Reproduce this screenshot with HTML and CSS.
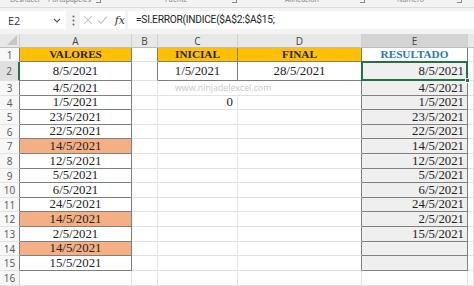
FILE: index.html
```html
<!DOCTYPE html>
<html lang="es">
<head>
<meta charset="utf-8">
<link rel="stylesheet" href="styles.css">
</head>
<body>
<div class="ribbon">
  <span class="grp g1">Deshacer</span>
  <span class="grp g2">Portapapeles</span>
  <span class="launch l1"></span>
  <span class="grp g3">Fuente</span>
  <span class="launch l2"></span>
  <span class="grp g4">Alineación</span>
  <span class="launch l3"></span>
  <span class="grp g5">Número</span>
  <span class="launch l4"></span>
</div>
<div class="fbar">
  <div class="namebox">
    <span class="ref">E2</span>
    <svg class="chev" width="8" height="5" viewBox="0 0 8 5"><path d="M1 1 L4 4 L7 1" fill="none" stroke="#555" stroke-width="1.1"/></svg>
  </div>
  <div class="dots">
    <svg width="3" height="11" viewBox="0 0 3 11"><circle cx="1.5" cy="1.5" r="1" fill="#666"/><circle cx="1.5" cy="5.5" r="1" fill="#666"/><circle cx="1.5" cy="9.5" r="1" fill="#666"/></svg>
  </div>
  <div class="fxbox">
    <svg class="ic" width="10" height="10" viewBox="0 0 10 10"><path d="M1 1 L9 9 M9 1 L1 9" stroke="#c4c4c4" stroke-width="1.1"/></svg>
    <svg class="ic" width="11" height="10" viewBox="0 0 11 10"><path d="M1 5.5 L4 8.5 L10 1.5" fill="none" stroke="#c4c4c4" stroke-width="1.1"/></svg>
    <span class="fx">fx</span>
  </div>
  <div class="formula">=SI.ERROR(INDICE($A$2:$A$15;</div>
</div>
<div class="sheet">
  <div class="ch corner"><svg width="10" height="10" viewBox="0 0 10 10"><path d="M10 0 L10 10 L0 10 Z" fill="#c6c6c6"/></svg></div>
  <div class="ch">A</div><div class="ch">B</div><div class="ch">C</div><div class="ch">D</div><div class="ch chsel">E</div><div class="ch rest"></div>

  <div class="rh br">1</div>
  <div class="c br bb yel hd">VALORES</div>
  <div class="c br"></div>
  <div class="c br bb yel hd">INICIAL</div>
  <div class="c br bb yel hd">FINAL</div>
  <div class="c br bb hd blue">RESULTADO</div>
  <div class="c"></div>

  <div class="rh br rhsel">2</div>
  <div class="c br bb">8/5/2021</div>
  <div class="c br"></div>
  <div class="c br bb">1/5/2021</div>
  <div class="c br bb">28/5/2021</div>
  <div class="c br bb res sel">8/5/2021<span class="handle"></span></div>
  <div class="c"></div>

  <div class="rh br">3</div>
  <div class="c br bb">4/5/2021</div>
  <div class="c"></div>
  <div class="c wm">www.ninjadelexcel.com</div>
  <div class="c br bb res">4/5/2021</div>
  <div class="c"></div>

  <div class="rh br">4</div>
  <div class="c br bb">1/5/2021</div>
  <div class="c"></div>
  <div class="c right">0</div>
  <div class="c br"></div>
  <div class="c br bb res">1/5/2021</div>
  <div class="c"></div>

  <div class="rh br">5</div>
  <div class="c br bb">23/5/2021</div>
  <div class="c"></div><div class="c"></div><div class="c br"></div>
  <div class="c br bb res">23/5/2021</div>
  <div class="c"></div>

  <div class="rh br">6</div>
  <div class="c br bb">22/5/2021</div>
  <div class="c"></div><div class="c"></div><div class="c br"></div>
  <div class="c br bb res">22/5/2021</div>
  <div class="c"></div>

  <div class="rh br">7</div>
  <div class="c br bb org">14/5/2021</div>
  <div class="c"></div><div class="c"></div><div class="c br"></div>
  <div class="c br bb res">14/5/2021</div>
  <div class="c"></div>

  <div class="rh br">8</div>
  <div class="c br bb">12/5/2021</div>
  <div class="c"></div><div class="c"></div><div class="c br"></div>
  <div class="c br bb res">12/5/2021</div>
  <div class="c"></div>

  <div class="rh br">9</div>
  <div class="c br bb">5/5/2021</div>
  <div class="c"></div><div class="c"></div><div class="c br"></div>
  <div class="c br bb res">5/5/2021</div>
  <div class="c"></div>

  <div class="rh br">10</div>
  <div class="c br bb">6/5/2021</div>
  <div class="c"></div><div class="c"></div><div class="c br"></div>
  <div class="c br bb res">6/5/2021</div>
  <div class="c"></div>

  <div class="rh br">11</div>
  <div class="c br bb">24/5/2021</div>
  <div class="c"></div><div class="c"></div><div class="c br"></div>
  <div class="c br bb res">24/5/2021</div>
  <div class="c"></div>

  <div class="rh br">12</div>
  <div class="c br bb org">14/5/2021</div>
  <div class="c"></div><div class="c"></div><div class="c br"></div>
  <div class="c br bb res">2/5/2021</div>
  <div class="c"></div>

  <div class="rh br">13</div>
  <div class="c br bb">2/5/2021</div>
  <div class="c"></div><div class="c"></div><div class="c br"></div>
  <div class="c br bb res">15/5/2021</div>
  <div class="c"></div>

  <div class="rh br">14</div>
  <div class="c br bb org">14/5/2021</div>
  <div class="c"></div><div class="c"></div><div class="c br"></div>
  <div class="c br bb res"></div>
  <div class="c"></div>

  <div class="rh br">15</div>
  <div class="c br bb">15/5/2021</div>
  <div class="c"></div><div class="c"></div><div class="c br"></div>
  <div class="c br bb res"></div>
  <div class="c"></div>

  <div class="rh">16</div>
  <div class="c"></div><div class="c"></div><div class="c"></div><div class="c"></div><div class="c"></div><div class="c"></div>
</div>
</body>
</html>
```
FILE: styles.css
```css
* { box-sizing: border-box; }
html, body {
  margin: 0;
  padding: 0;
  width: 474px;
  height: 286px;
  overflow: hidden;
  background: #ffffff;
}
.ribbon {
  position: relative;
  height: 8px;
  background: #f3f3f3;
  border-bottom: 1px solid #dcdcdc;
  overflow: hidden;
  font-family: "Open Sans", sans-serif;
  font-size: 7px;
  color: #7a7a7a;
}
.grp {
  position: absolute;
  top: -4px;
  line-height: 8px;
}
.g1 { left: 10px; }
.g2 { left: 48px; }
.g3 { left: 165px; }
.g4 { left: 285px; }
.g5 { left: 397px; }
.launch {
  position: absolute;
  top: -2px;
  width: 5px;
  height: 5px;
  border-right: 1px solid #888;
  border-bottom: 1px solid #888;
}
.l1 { left: 96px; }
.l2 { left: 232px; }
.l3 { left: 360px; }
.l4 { left: 457px; }

.fbar {
  height: 26px;
  background: #f3f3f3;
  display: flex;
  align-items: flex-start;
  padding-top: 3px;
  font-family: "Open Sans", sans-serif;
}
.namebox {
  width: 66px;
  height: 18px;
  background: #ffffff;
  display: flex;
  align-items: center;
  justify-content: space-between;
  padding: 0 5px 0 8px;
  font-size: 11px;
  color: #333;
}
.dots {
  width: 14px;
  height: 18px;
  display: flex;
  align-items: center;
  justify-content: center;
}
.fxbox {
  width: 45px;
  height: 18px;
  background: #ffffff;
  display: flex;
  align-items: center;
  gap: 4px;
  padding-left: 3px;
}
.fx {
  font-family: "DejaVu Serif", serif;
  font-style: italic;
  font-size: 11px;
  color: #333;
  margin-left: 3px;
}
.formula {
  flex: 1;
  height: 18px;
  margin-left: 3px;
  background: #ffffff;
  padding-left: 8px;
  font-family: Roboto, "Open Sans", sans-serif;
  font-size: 10.2px;
  letter-spacing: -0.25px;
  line-height: 18px;
  color: #222;
  white-space: nowrap;
}

.sheet {
  display: grid;
  grid-template-columns: 20px 112px 26px 80px 124px 106px 1fr;
  grid-template-rows: 14px 14px 19px 15px 14px 15px 14px 15px 15px 14px 15px 14px 15px 15px 14px 15px 15px;
  font-family: "Liberation Serif", serif;
  font-size: 12.8px;
  color: #222;
}
.ch {
  background: #e8e8e8;
  border-right: 1px solid #d0d0d0;
  border-bottom: 1px solid #bdbdbd;
  font-family: "Open Sans", sans-serif;
  font-size: 10px;
  color: #444;
  display: flex;
  align-items: center;
  justify-content: center;
}
.corner {
  justify-content: flex-end;
  align-items: flex-end;
  padding: 0 2px 2px 0;
}
.chsel { background: #d4d4d4; }
.rest { border-right: none; }
.rh {
  background: #f7f7f7;
  border-right: 1px solid #d0d0d0;
  border-bottom: 1px solid #e2e2e2;
  font-family: "Open Sans", sans-serif;
  font-size: 10px;
  color: #555;
  display: flex;
  align-items: center;
  justify-content: center;
}
.rhsel {
  background: #e0e0e0;
  border-right: 2px solid #217346 !important;
}
.c {
  border-right: 1px solid #e2e2e2;
  border-bottom: 1px solid #e2e2e2;
  display: flex;
  align-items: center;
  justify-content: center;
  white-space: nowrap;
  line-height: 1;
}
.br { border-right-color: #7f7f7f; }
.bb { border-bottom-color: #7f7f7f; }
.yel { background: #ffc000; }
.org { background: #f4b084; }
.hd {
  font-weight: bold;
  font-size: 11.2px;
}
.blue { color: #2e75b6; }
.res {
  background: #efefef;
  justify-content: flex-end;
  padding-right: 3px;
}
.right {
  justify-content: flex-end;
  padding-right: 4px;
}
.wm {
  grid-column: span 2;
  justify-content: flex-start;
  padding-left: 17px;
  font-family: "Open Sans", sans-serif;
  font-size: 8.8px;
  color: #c8c8c8;
  border-right-color: #7f7f7f;
}
.sel { position: relative; }
.sel::after {
  content: "";
  position: absolute;
  left: -1px;
  top: -1px;
  right: -1px;
  bottom: -1px;
  border: 2px solid #217346;
}
.handle {
  position: absolute;
  right: -3px;
  bottom: -3px;
  width: 5px;
  height: 5px;
  background: #217346;
  border: 1px solid #ffffff;
  z-index: 2;
}
```
